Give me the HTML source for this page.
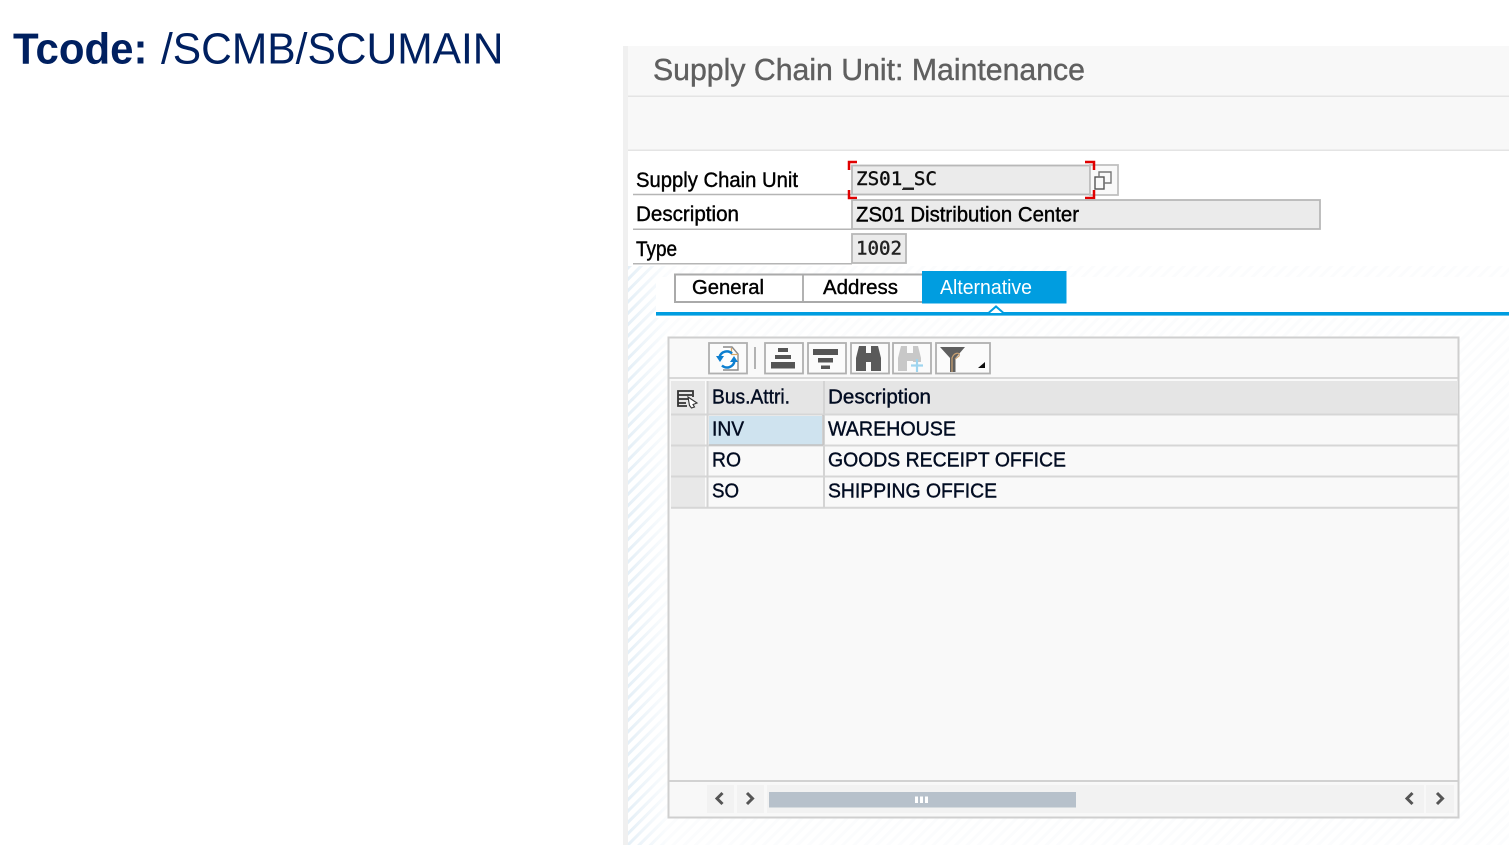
<!DOCTYPE html>
<html lang="en"><head><meta charset="utf-8"><title>Tcode: /SCMB/SCUMAIN</title>
<style>
html,body{margin:0;padding:0;background:#fff;width:1509px;height:845px;overflow:hidden}
svg{display:block;position:absolute;left:0;top:0}
text{font-family:"Liberation Sans",sans-serif}
.m{font-family:"DejaVu Sans Mono","Liberation Mono",monospace;stroke-width:.4;paint-order:stroke}
.t{stroke-width:.4;paint-order:stroke}
</style></head><body>
<svg width="1509" height="845" viewBox="0 0 1509 845" xmlns="http://www.w3.org/2000/svg">
<defs>
<pattern id="h1" width="8" height="8" patternUnits="userSpaceOnUse" patternTransform="rotate(45)"><rect width="8" height="8" fill="#fff"/><rect width="3" height="8" fill="#e4eff7"/></pattern>
<pattern id="h2" width="8" height="8" patternUnits="userSpaceOnUse" patternTransform="rotate(45)"><rect width="8" height="8" fill="#fff"/><rect width="3" height="8" fill="#fbfcfd"/></pattern>
<linearGradient id="fade" x1="0" x2="1" y1="0" y2="0"><stop offset="0" stop-color="#fff" stop-opacity="0"/><stop offset=".35" stop-color="#fff" stop-opacity=".35"/><stop offset="1" stop-color="#fff" stop-opacity=".85"/></linearGradient>
<filter id="b" filterUnits="userSpaceOnUse" x="0" y="0" width="1509" height="845"><feGaussianBlur stdDeviation="0.3"/></filter>
</defs>
<text x="13" y="63.500" font-size="44" font-weight="700" fill="#002060" textLength="134.500" lengthAdjust="spacingAndGlyphs">Tcode:</text>
<text x="161" y="63.500" font-size="44" fill="#002060" textLength="342.500" lengthAdjust="spacingAndGlyphs">/SCMB/SCUMAIN</text>
<g filter="url(#b)">
<rect x="623" y="46" width="886" height="799" fill="#fff"/>
<rect x="623" y="46" width="5" height="799" fill="#f0f0f0"/>
<rect x="628" y="46" width="881" height="50" fill="#f8f8f8"/>
<rect x="628" y="95.500" width="881" height="1.500" fill="#e4e4e4"/>
<rect x="628" y="97" width="881" height="53" fill="#f8f8f8"/>
<rect x="628" y="149.500" width="881" height="1.500" fill="#e4e4e4"/>
<rect x="628" y="266" width="881" height="11" fill="url(#h2)"/>
<rect x="628" y="266" width="40" height="579" fill="url(#h1)"/>
<rect x="628" y="266" width="40" height="579" fill="url(#fade)"/>
<rect x="668" y="318" width="841" height="527" fill="url(#h2)"/>
<rect x="656" y="277" width="853" height="41" fill="#fff"/>
<text class="t" x="653" y="80" font-size="31" fill="#5e5e5e" stroke="#5e5e5e" textLength="432" lengthAdjust="spacingAndGlyphs">Supply Chain Unit: Maintenance</text>
<g stroke="#b5b5b5" stroke-width="1.500">
<path d="M633 194.500H852M633 229.300H852M633 263.800H852"/>
</g>
<text class="t" x="636" y="187" font-size="21" fill="#000" stroke="#000" textLength="162" lengthAdjust="spacingAndGlyphs">Supply Chain Unit</text>
<text class="t" x="636" y="221" font-size="21" fill="#000" stroke="#000" textLength="103" lengthAdjust="spacingAndGlyphs">Description</text>
<text class="t" x="636" y="256" font-size="21" fill="#000" stroke="#000" textLength="41" lengthAdjust="spacingAndGlyphs">Type</text>
<rect x="852" y="165.500" width="238" height="29" fill="#ebebeb" stroke="#b8b8b8" stroke-width="1.800"/>
<rect x="1090" y="165" width="28" height="30" fill="#f9f9f9" stroke="#c0c0c0" stroke-width="1.800"/>
<g fill="none" stroke="#555" stroke-width="1.400">
<rect x="1095" y="177" width="9" height="12"/>
<path d="M1099 177V172H1111V183H1104" stroke="#777"/>
</g>
<g fill="none" stroke="#e00000" stroke-width="2.500">
<path d="M857 162H849V170M857 198H849V190M1085 162H1094V170M1085 198H1094V190"/>
</g>
<text class="m" x="856" y="185" font-size="19" fill="#111" stroke="#111" textLength="81" lengthAdjust="spacingAndGlyphs">ZS01_SC</text>
<rect x="903" y="187.500" width="11" height="1.800" fill="#222"/>
<rect x="852" y="200" width="468" height="29" fill="#ebebeb" stroke="#b8b8b8" stroke-width="1.800"/>
<text class="t" x="856" y="221.500" font-size="21" fill="#000" stroke="#000" textLength="223" lengthAdjust="spacingAndGlyphs">ZS01 Distribution Center</text>
<rect x="852" y="234" width="54" height="29" fill="#ebebeb" stroke="#b8b8b8" stroke-width="1.800"/>
<text class="m" x="856" y="254.500" font-size="19" fill="#222" stroke="#222" textLength="46" lengthAdjust="spacingAndGlyphs">1002</text>
<rect x="675" y="274.500" width="248" height="27.500" fill="#fff" stroke="#aaa" stroke-width="2"/>
<path d="M803 275V302" stroke="#aaa" stroke-width="1.800"/>
<rect x="922" y="271" width="144.500" height="32.500" fill="#009de0"/>
<text class="t" x="692" y="294" font-size="20.500" fill="#000" stroke="#000" textLength="72" lengthAdjust="spacingAndGlyphs">General</text>
<text class="t" x="823" y="294" font-size="20.500" fill="#000" stroke="#000" textLength="75" lengthAdjust="spacingAndGlyphs">Address</text>
<text x="940" y="294" font-size="20.500" fill="#fff" textLength="92" lengthAdjust="spacingAndGlyphs">Alternative</text>
<rect x="656" y="312" width="853" height="3.600" fill="#009de0"/>
<path d="M989 313L996 306L1003 313Z" fill="#fff"/>
<path d="M988.500 313L996 306.500L1003.500 313" fill="none" stroke="#009de0" stroke-width="2"/>

<rect x="668.500" y="337.500" width="790" height="480" fill="#f9f9f9" stroke="#cfcfcf" stroke-width="2"/>
<rect x="669.500" y="377" width="788" height="2" fill="#d8d8d8"/>
<rect x="671" y="381" width="787" height="33" fill="#e5e5e5"/>
<rect x="671" y="381" width="34" height="127" fill="#e8e8e8"/>
<rect x="705" y="381" width="3" height="127" fill="#fbfbfb"/>
<path d="M671 414.500H1458M671 445.500H1458M671 476.500H1458M671 507.800H1458" stroke="#d6d6d6" stroke-width="2"/>
<path d="M707.500 381V508M824 381V508" stroke="#d4d4d4" stroke-width="2"/>
<rect x="709" y="416" width="113" height="28.500" fill="#cfe3ef"/>
<path d="M709 445H823M823 415V445" stroke="#c2c2c2" stroke-width="1.500"/>

<g fill="none" stroke="#333" stroke-width="1.800">
<path d="M693 397V391H678V406H687"/><path d="M678 395H692M678 399H688M678 403H686"/>
</g>
<path d="M688 397L697 403L693 404.500L694.500 407L691.500 408L689.500 405.500Z" fill="#fff" stroke="#333" stroke-width="1.100"/>

<g fill="#050a20" stroke="#050a20">
<text class="t" x="712" y="403.500" font-size="20.500" textLength="78" lengthAdjust="spacingAndGlyphs">Bus.Attri.</text>
<text class="t" x="828" y="403.500" font-size="20.500" textLength="103" lengthAdjust="spacingAndGlyphs">Description</text>
<text class="t" x="712" y="435.500" font-size="20.500" textLength="32" lengthAdjust="spacingAndGlyphs">INV</text>
<text class="t" x="828" y="435.500" font-size="20.500" textLength="128" lengthAdjust="spacingAndGlyphs">WAREHOUSE</text>
<text class="t" x="712" y="466.500" font-size="20.500" textLength="29" lengthAdjust="spacingAndGlyphs">RO</text>
<text class="t" x="828" y="466.500" font-size="20.500" textLength="238" lengthAdjust="spacingAndGlyphs">GOODS RECEIPT OFFICE</text>
<text class="t" x="712" y="497.500" font-size="20.500" textLength="27" lengthAdjust="spacingAndGlyphs">SO</text>
<text class="t" x="828" y="497.500" font-size="20.500" textLength="169" lengthAdjust="spacingAndGlyphs">SHIPPING OFFICE</text>
</g>

<g fill="#fbfbfb" stroke="#b0b0b0" stroke-width="1.800">
<rect x="709" y="343" width="38" height="30.500"/>
<rect x="765" y="343" width="38" height="30.500"/>
<rect x="808" y="343" width="38" height="30.500"/>
<rect x="851" y="343" width="38" height="30.500"/>
<rect x="893" y="343" width="38" height="30.500"/>
<rect x="936" y="343" width="54" height="30.500"/>
</g>
<path d="M755 347V369" stroke="#aaa" stroke-width="1.800"/>
<path d="M723 370H738V354L732 347H723" fill="#fff" stroke="#8a8a8a" stroke-width="1.400"/>
<path d="M731.500 348V354.500H738" fill="none" stroke="#d8a868" stroke-width="1.300"/>
<path d="M719.500 357A7.500 7.500 0 0 1 732 353.500M734.500 361A7.500 7.500 0 0 1 722 365.500" fill="none" stroke="#0a7fd0" stroke-width="2.500"/>
<path d="M716 356H724L720 362ZM730 362H738L734 356Z" fill="#0a7fd0"/>
<g fill="#555">
<rect x="778" y="348" width="10" height="4"/><rect x="775" y="355" width="16" height="4"/><rect x="771" y="362" width="24" height="6.500"/>
<rect x="813" y="349" width="25" height="6"/><rect x="818" y="358" width="15" height="4.500"/><rect x="821" y="365.500" width="9" height="3.500"/>
</g>
<path d="M859 346H866V371H856V358ZM871 346H878L881 358V371H871Z" fill="#5a5a5a"/>
<rect x="865" y="353" width="7" height="9" fill="#5a5a5a"/>
<path d="M901 346H907V371H898V358ZM913 346H918L921 358V362H913Z" fill="#c8c8c8"/>
<rect x="907" y="353" width="6" height="8" fill="#c8c8c8"/>
<path d="M917 359V372M911 365.500H923" stroke="#9fd5ef" stroke-width="2.200"/>
<path d="M940 347H965L955.500 358V372H950V358Z" fill="#5f5f5f"/>
<path d="M952 372V358C954 352 961 352 959 356L955 359" fill="none" stroke="#c9a070" stroke-width="1.200"/>
<path d="M985 362V368H978Z" fill="#111"/>

<rect x="670" y="783" width="787" height="33" fill="#f8f8f8"/>
<rect x="669.500" y="780" width="788" height="2" fill="#d2d2d2"/>
<rect x="707" y="785" width="27" height="28" fill="#f2f2f2"/>
<rect x="737" y="785" width="27" height="28" fill="#f2f2f2"/>
<rect x="767" y="785" width="630" height="28" fill="#f2f2f2"/>
<rect x="1397" y="785" width="27" height="28" fill="#f2f2f2"/>
<rect x="1426" y="785" width="28" height="28" fill="#f2f2f2"/>
<rect x="769" y="792" width="307" height="15.500" fill="#b7c1cb"/>
<path d="M915 796.500h3v6.500h-3zM920 796.500h3v6.500h-3zM925 796.500h3v6.500h-3z" fill="#fff"/>
<g fill="none" stroke="#555" stroke-width="3">
<path d="M722.500 793L717 798.500L722.500 804M747 793L752.500 798.500L747 804M1412.500 793L1407 798.500L1412.500 804M1437 793L1442.500 798.500L1437 804"/>
</g>
</g>
</svg>
</body></html>
